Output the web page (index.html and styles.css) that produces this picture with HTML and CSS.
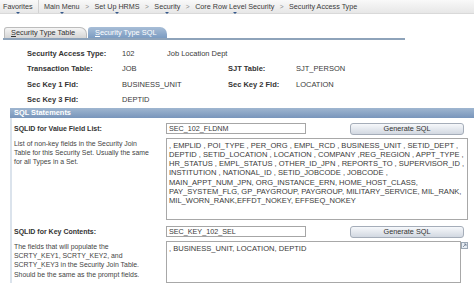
FILE: index.html
```html
<!DOCTYPE html>
<html>
<head>
<meta charset="utf-8">
<link rel="stylesheet" href="styles.css">
</head>
<body>
<div class="crumbs">
  <span class="crumb fav">Favorites<i class="arr"></i></span>
  <span class="crumb">Main Menu<i class="arr"></i></span>
  <span class="sep">&gt;</span>
  <span class="crumb">Set Up HRMS<i class="arr"></i></span>
  <span class="sep">&gt;</span>
  <span class="crumb">Security<i class="arr"></i></span>
  <span class="sep">&gt;</span>
  <span class="crumb">Core Row Level Security<i class="arr"></i></span>
  <span class="sep">&gt;</span>
  <span class="crumb">Security Access Type</span>
</div>

<div class="tabbar">
  <div class="tab tab1"><u>S</u>ecurity Type Table</div>
  <div class="tab tab2"><u>S</u>ecurity Type SQL</div>
</div>

<div class="fields">
  <div class="lbl">Security Access Type:</div>
  <div><span class="num">102</span>Job Location Dept</div>
  <div></div>
  <div></div>

  <div class="lbl">Transaction Table:</div>
  <div>JOB</div>
  <div class="lbl">SJT Table:</div>
  <div>SJT_PERSON</div>

  <div class="lbl">Sec Key 1 Fld:</div>
  <div>BUSINESS_UNIT</div>
  <div class="lbl">Sec Key 2 Fld:</div>
  <div>LOCATION</div>

  <div class="lbl">Sec Key 3 Fld:</div>
  <div>DEPTID</div>
  <div></div>
  <div></div>
</div>

<div class="sec">
  <div class="sec-head">SQL Statements</div>
  <div class="sec-body">
    <div class="lbl2">SQLID for Value Field List:</div>
    <div class="ctrls">
      <div class="inp">SEC_102_FLDNM</div>
      <div class="btn">Generate SQL</div>
    </div>

    <div class="desc">List of non-key fields in the Security Join<br>Table for this Security Set. Usually the same<br>for all Types in a Set.</div>
    <div class="ta ta1">, EMPLID , POI_TYPE , PER_ORG , EMPL_RCD , BUSINESS_UNIT , SETID_DEPT ,
DEPTID , SETID_LOCATION , LOCATION , COMPANY ,REG_REGION , APPT_TYPE ,
HR_STATUS , EMPL_STATUS , OTHER_ID_JPN , REPORTS_TO , SUPERVISOR_ID ,
INSTITUTION , NATIONAL_ID , SETID_JOBCODE , JOBCODE ,
MAIN_APPT_NUM_JPN, ORG_INSTANCE_ERN, HOME_HOST_CLASS,
PAY_SYSTEM_FLG, GP_PAYGROUP, PAYGROUP, MILITARY_SERVICE, MIL_RANK,
MIL_WORN_RANK,EFFDT_NOKEY, EFFSEQ_NOKEY</div>

    <div class="lbl2 row2">SQLID for Key Contents:</div>
    <div class="ctrls row2">
      <div class="inp">SEC_KEY_102_SEL</div>
      <div class="btn">Generate SQL</div>
    </div>

    <div class="desc">The fields that will populate the<br>SCRTY_KEY1, SCRTY_KEY2, and<br>SCRTY_KEY3 in the Security Join Table.<br>Should be the same as the prompt fields.</div>
    <div class="tawrap">
      <div class="ta ta2">, BUSINESS_UNIT, LOCATION, DEPTID</div>
      <svg class="expand" width="7" height="7" viewBox="0 0 7 7">
        <rect x="0.5" y="0.5" width="6" height="6" fill="#e8edf3" stroke="#9aa6b4" stroke-width="1"/>
        <path d="M2 5 L5 2 M3 2 H5 V4" fill="none" stroke="#6c7c90" stroke-width="0.8"/>
      </svg>
    </div>
  </div>
</div>
</body>
</html>
```

FILE: styles.css
```css
body {
  margin: 0;
  width: 474px;
  overflow: hidden;
  font-family: "Liberation Sans", Arial, sans-serif;
  color: #333;
  background: #fff;
}

.crumbs {
  display: flex;
  align-items: flex-start;
  gap: 5.5px;
  height: 14px;
  box-sizing: border-box;
  padding-left: 3px;
  background: linear-gradient(#f9f9f9, #e7e7e7);
  border-bottom: 1px solid #d9d9d9;
  font-size: 7.2px;
  line-height: 9px;
  color: #3a3a3a;
}

.crumb {
  display: flex;
  flex-direction: column;
  align-items: center;
  padding-top: 1.5px;
  white-space: nowrap;
}

.fav {
  height: 13px;
  box-sizing: border-box;
  padding-right: 5px;
  border-right: 1px solid #d2d2d2;
}

.sep {
  padding-top: 1.5px;
  color: #8a8a8a;
  font-size: 6.5px;
}

.arr {
  display: block;
  width: 0;
  height: 0;
  margin-top: 1px;
  border-left: 2px solid transparent;
  border-right: 2px solid transparent;
  border-top: 2.5px solid #34598c;
}

.tabbar {
  display: flex;
  gap: 1px;
  width: 401px;
  height: 11px;
  margin: 13px 0 0 3px;
  padding-left: 1px;
  border-bottom: 2px solid #8ea3ba;
}

.tab {
  height: 11px;
  box-sizing: border-box;
  padding-left: 7px;
  font-size: 7.4px;
  line-height: 11px;
  white-space: nowrap;
  border-radius: 3px 7px 0 0;
}

.tab1 {
  width: 83px;
  background: linear-gradient(#f5f5f5, #d5d5d5);
  border: 1px solid #bcbcbc;
  border-bottom: none;
  line-height: 10px;
  padding-left: 6px;
  color: #333;
}

.tab2 {
  width: 79px;
  background: linear-gradient(#a8bed7, #7c9cc2);
  color: #fff;
}

.tab u {
  text-decoration-thickness: 0.5px;
}

.fields {
  display: grid;
  grid-template-columns: 95px 106px 68px 1fr;
  padding: 5.5px 0 0 27px;
  font-size: 7.5px;
  line-height: 15.5px;
  color: #3a3a3a;
}

.lbl {
  font-weight: bold;
  color: #333;
}

.num {
  display: inline-block;
  width: 45px;
}

.sec {
  margin-left: 10px;
}

.sec-head {
  height: 10px;
  padding-left: 4px;
  background: linear-gradient(#9fb6d0, #7895bb);
  color: #fff;
  font-weight: bold;
  font-size: 7.4px;
  line-height: 10px;
}

.sec-body {
  display: grid;
  grid-template-columns: 152px 302px;
  padding: 5px 0 0 2px;
  border-left: 2px solid #dbe3ec;
}

.lbl2 {
  font-weight: bold;
  font-size: 7px;
  line-height: 12px;
  color: #333;
}

.ctrls {
  display: flex;
  align-items: center;
  gap: 44px;
  height: 12px;
}

.row2 {
  margin-top: 6px;
}

.inp {
  width: 140px;
  height: 11px;
  box-sizing: border-box;
  padding-left: 2px;
  border: 1px solid #a6a6a6;
  font-size: 7.2px;
  line-height: 9px;
  color: #3a3a3a;
  background: #fff;
}

.btn {
  width: 114px;
  height: 12px;
  box-sizing: border-box;
  border: 1px solid #a5adb9;
  border-radius: 3px;
  background: linear-gradient(#f6f8fb, #d2d8e1);
  font-size: 7.3px;
  line-height: 10px;
  text-align: center;
  color: #333;
}

.desc {
  margin-top: 3px;
  padding-top: 1.5px;
  font-size: 6.9px;
  line-height: 9.2px;
  color: #444;
}

.ta {
  margin-top: 3px;
  box-sizing: border-box;
  padding: 2px 2px 0 2px;
  border: 1px solid #a8a8a8;
  font-size: 7.55px;
  line-height: 9.3px;
  white-space: pre;
  overflow: hidden;
  color: #3a3a3a;
  background: #fff;
}

.ta1 {
  width: 302px;
  height: 82px;
}

.tawrap {
  display: flex;
  align-items: flex-start;
}

.ta2 {
  width: 296px;
  height: 42px;
}

.expand {
  display: block;
  margin-top: 4px;
}
```
